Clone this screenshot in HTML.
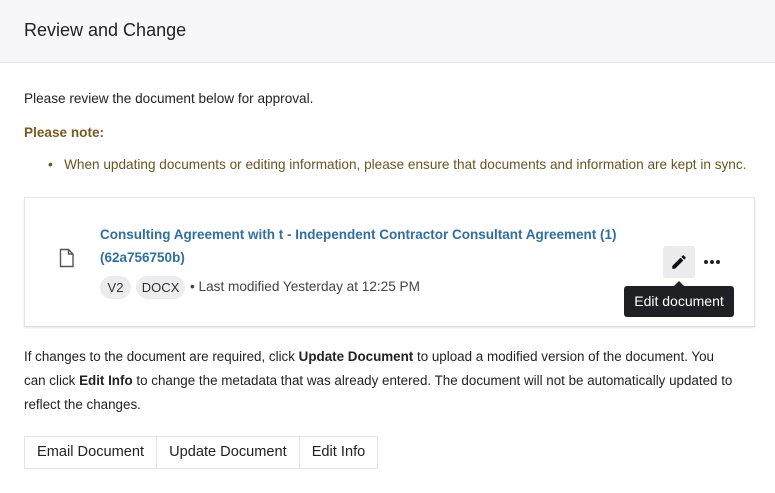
<!DOCTYPE html>
<html><head><style>
body{margin:0;width:775px;height:493px;background:#fff;font-family:"Liberation Sans",Arial,sans-serif;color:#222;position:relative;overflow:hidden}
.hdr{position:absolute;left:0;top:0;width:775px;height:62px;background:#f7f7f9;border-bottom:1px solid #e2e2e6}
.hdr div{position:absolute;left:24px;top:20px;font-size:18px;color:#222}
.t{position:absolute;font-size:13.6px;white-space:nowrap}
.card{position:absolute;left:24px;top:197px;width:729px;height:128px;border:1px solid #e6e6e6;border-bottom:1px solid #ddd;box-shadow:0 1px 2px rgba(0,0,0,.1)}
.pill{position:absolute;top:276px;height:23px;line-height:23px;background:#ececef;border-radius:12px;font-size:13px;text-align:center;color:#333}
.btns{position:absolute;left:24px;top:436px;height:31px;border:1px solid #e4e4e4;display:flex}
.btns div{font-size:14.6px;padding:0 12px;line-height:31px;border-right:1px solid #e4e4e4}
.btns div:last-child{border-right:none}
</style></head><body>
<div class="hdr"><div>Review and Change</div></div>
<div class="t" style="left:24px;top:91px;">Please review the document below for approval.</div>
<div class="t" style="left:24px;top:125px;color:#7a5a1c;font-weight:bold">Please note:</div>
<div class="t" style="left:48px;top:157px;color:#6b5420">•&nbsp;&nbsp; When updating documents or editing information, please ensure that documents and information are kept in sync.</div>
<div class="card"></div>
<svg style="position:absolute;left:59px;top:248px" width="16" height="20" viewBox="0 0 16 20"><path d="M1.5 1.5h8l4.5 4.5v12.5h-12.5z M9.5 1.5v4.5h4.5" fill="none" stroke="#555" stroke-width="1.4"/></svg>
<div class="t" style="left:100px;top:227px;color:#2e6fa5;font-weight:bold;font-size:13.5px">Consulting Agreement with t - Independent Contractor Consultant Agreement (1)</div>
<div class="t" style="left:100px;top:250px;color:#2e6fa5;font-weight:bold;font-size:13.5px">(62a756750b)</div>
<div class="pill" style="left:100px;width:31px">V2</div>
<div class="pill" style="left:136px;width:49px">DOCX</div>
<div class="t" style="left:190px;top:279px;color:#444">• Last modified Yesterday at 12:25 PM</div>
<div style="position:absolute;left:663px;top:246px;width:32px;height:32px;background:#ececef;border-radius:3px"></div>
<svg style="position:absolute;left:670px;top:253px" width="18" height="18" viewBox="0 0 24 24"><path d="M3 17.25V21h3.75L17.81 9.94l-3.75-3.75L3 17.25zM20.71 7.04a1 1 0 000-1.41l-2.34-2.34a1 1 0 00-1.41 0l-1.83 1.83 3.75 3.75 1.83-1.83z" fill="#111"/></svg>
<svg style="position:absolute;left:703px;top:258px" width="18" height="8"><circle cx="3" cy="4" r="2" fill="#222"/><circle cx="9" cy="4" r="2" fill="#222"/><circle cx="15" cy="4" r="2" fill="#222"/></svg>
<div style="position:absolute;left:674px;top:281px;width:0;height:0;border:5px solid transparent;border-bottom-color:#1f2024;border-top:none"></div>
<div style="position:absolute;left:624px;top:286px;width:110px;height:31px;background:#1f2024;border-radius:3px;color:#fff;font-size:14px;line-height:31px;text-align:center">Edit document</div>
<div class="t" style="left:24px;top:345px;line-height:24px;white-space:normal;width:725px;font-size:13.4px">If changes to the document are required, click <b>Update Document</b> to upload a modified version of the document. You<br>can click <b>Edit Info</b> to change the metadata that was already entered. The document will not be automatically updated to<br>reflect the changes.</div>
<div class="btns"><div>Email Document</div><div>Update Document</div><div>Edit Info</div></div>
</body></html>
